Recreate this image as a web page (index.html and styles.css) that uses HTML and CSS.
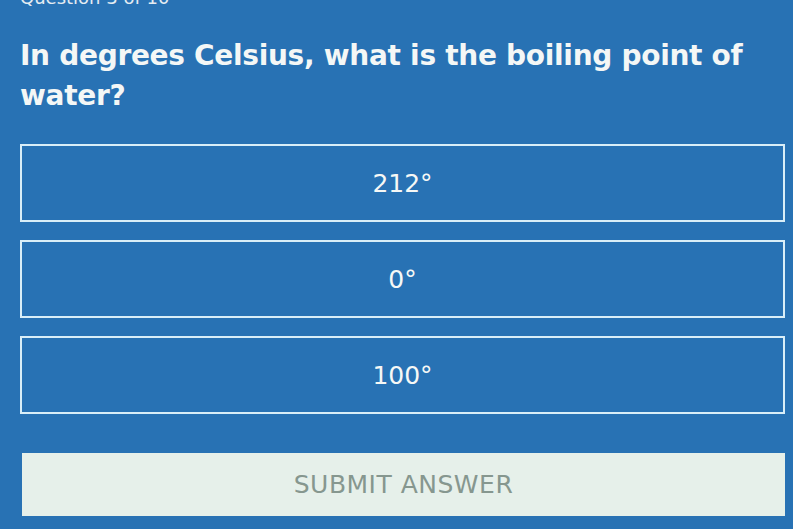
FILE: index.html
```html
<!DOCTYPE html>
<html lang="en">
<head>
  <meta charset="UTF-8">
  <title>Quiz</title>
  <link rel="stylesheet" href="styles.css">
</head>
<body>
  <div class="quiz">
    <div class="counter">Question 3 of 10</div>
    <h1 class="question">In degrees Celsius, what is the boiling point of water?</h1>

    <div class="options">
      <button class="option">212°</button>
      <button class="option">0°</button>
      <button class="option">100°</button>
    </div>

    <button class="submit">SUBMIT ANSWER</button>
  </div>
</body>
</html>
```

FILE: styles.css
```css
html, body {
  margin: 0;
  height: 100%;
}
body {
  background: #2872b4;
  font-family: "DejaVu Sans", "Open Sans", sans-serif;
  color: #f2f6f8;
  overflow: hidden;
}
.quiz {
  padding: 0 8px 0 20px;
  display: flex;
  flex-direction: column;
}
.counter {
  margin-top: -12px;
  font-size: 18px;
  line-height: 20px;
  color: #e4ecf2;
}
.question {
  margin: 28px 0 0 0;
  font-size: 28px;
  font-weight: bold;
  line-height: 40px;
  letter-spacing: -0.3px;
  color: #f4f7f6;
}
.options {
  margin-top: 28px;
  display: flex;
  flex-direction: column;
  gap: 18px;
}
.option {
  height: 78px;
  background: transparent;
  border: 2px solid #d9eef8;
  color: #f6f8f6;
  font-family: inherit;
  font-size: 25px;
  cursor: pointer;
}
.submit {
  margin-top: 39px;
  margin-left: 2px;
  height: 63px;
  border: none;
  background: #e6f0ea;
  color: #86978f;
  font-family: inherit;
  font-size: 25px;
  letter-spacing: 0.5px;
  cursor: pointer;
}
```
